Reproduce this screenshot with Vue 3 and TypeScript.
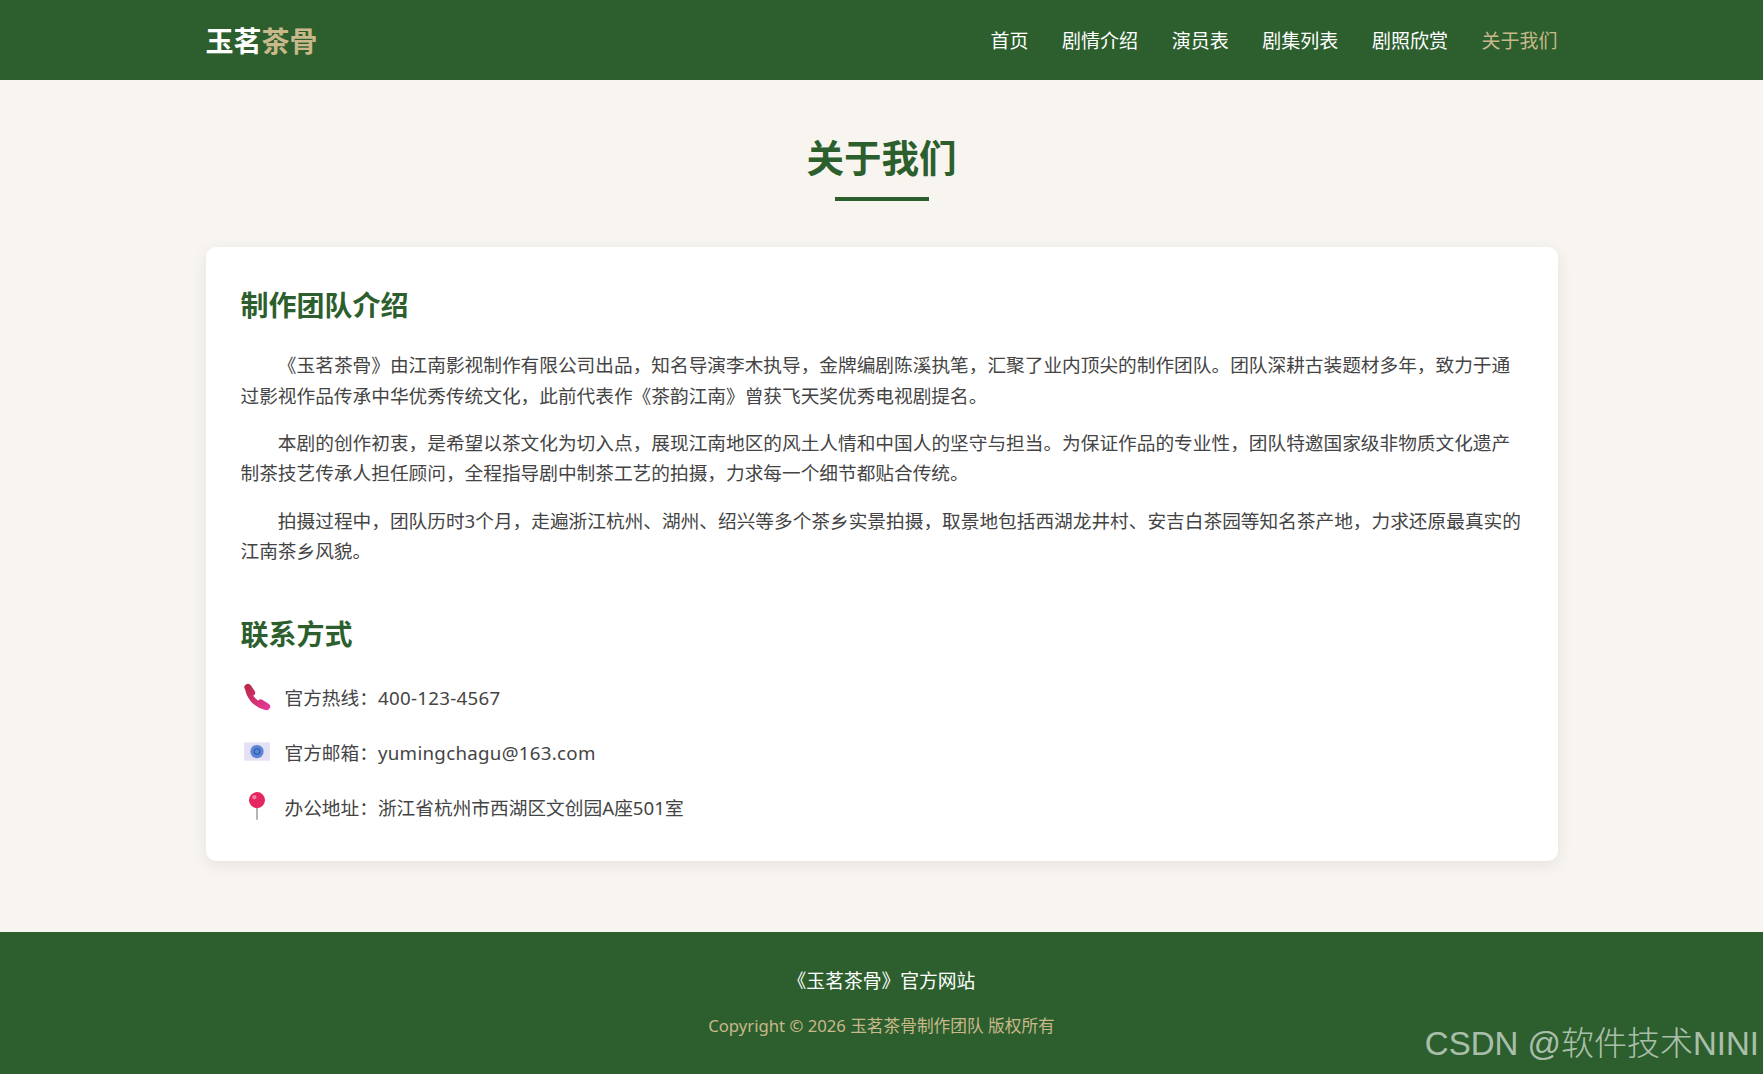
<script setup lang="ts">
interface NavItem {
  label: string
  active?: boolean
}

const navItems: NavItem[] = [
  { label: '首页' },
  { label: '剧情介绍' },
  { label: '演员表' },
  { label: '剧集列表' },
  { label: '剧照欣赏' },
  { label: '关于我们', active: true }
]

const paragraphs = [
  '《玉茗茶骨》由江南影视制作有限公司出品，知名导演李木执导，金牌编剧陈溪执笔，汇聚了业内顶尖的制作团队。团队深耕古装题材多年，致力于通过影视作品传承中华优秀传统文化，此前代表作《茶韵江南》曾获飞天奖优秀电视剧提名。',
  '本剧的创作初衷，是希望以茶文化为切入点，展现江南地区的风土人情和中国人的坚守与担当。为保证作品的专业性，团队特邀国家级非物质文化遗产制茶技艺传承人担任顾问，全程指导剧中制茶工艺的拍摄，力求每一个细节都贴合传统。',
  '拍摄过程中，团队历时3个月，走遍浙江杭州、湖州、绍兴等多个茶乡实景拍摄，取景地包括西湖龙井村、安吉白茶园等知名茶产地，力求还原最真实的江南茶乡风貌。'
]
</script>

<template>
  <div class="page">
    <header class="site-header">
      <div class="container header-inner">
        <div class="logo">玉茗<span>茶骨</span></div>
        <nav class="nav">
          <a v-for="item in navItems" :key="item.label" :class="{ active: item.active }">{{ item.label }}</a>
        </nav>
      </div>
    </header>

    <main class="container main">
      <h1 class="page-title">关于我们</h1>

      <section class="card">
        <h2>制作团队介绍</h2>
        <p v-for="text in paragraphs" :key="text" class="intro">{{ text }}</p>

        <h2 class="contact-title">联系方式</h2>
        <ul class="contact">
          <li>
            <svg class="icon" viewBox="0 0 28 28">
              <defs>
                <linearGradient id="phoneGrad" gradientUnits="userSpaceOnUse" x1="3" y1="3" x2="26" y2="26">
                  <stop offset="0" stop-color="#bb2445" />
                  <stop offset="1" stop-color="#e83c9e" />
                </linearGradient>
              </defs>
              <g fill="none" stroke="url(#phoneGrad)" stroke-linecap="round">
                <path stroke-width="5" d="M5.500 6C6 13 12 21 22 23.500" />
                <path stroke-width="6.500" d="M5.500 5L9 10" />
                <path stroke-width="6.500" d="M17.500 19.500L23 23" />
              </g>
            </svg>
            <span>官方热线：<span class="latin">400-123-4567</span></span>
          </li>
          <li>
            <svg class="icon" viewBox="0 0 28 28">
              <rect x="2" y="6" width="24" height="17" fill="#e3e1f3" />
              <circle cx="14" cy="14.500" r="6.200" fill="#5b86d6" />
              <circle cx="14" cy="14.500" r="2.600" fill="none" stroke="#2f55a4" stroke-width="1" />
            </svg>
            <span>官方邮箱：<span class="latin">yumingchagu@163.com</span></span>
          </li>
          <li>
            <svg class="icon" viewBox="0 0 28 28">
              <rect x="13.200" y="11" width="1.600" height="16" rx=".8" fill="#a9a9b0" />
              <circle cx="14" cy="8.500" r="7.500" fill="#e5265f" />
              <circle cx="11.500" cy="5.800" r="2" fill="#f77fa1" />
            </svg>
            <span>办公地址：浙江省杭州市西湖区文创园A座501室</span>
          </li>
        </ul>
      </section>
    </main>

    <footer class="site-footer">
      <p class="footer-name">《玉茗茶骨》官方网站</p>
      <p class="footer-copy">Copyright © 2026 玉茗茶骨制作团队 版权所有</p>
    </footer>

    <div class="watermark">CSDN @软件技术NINI</div>
  </div>
</template>

<style>
html,
body {
  margin: 0;
  background: #f8f5f0;
}
</style>

<style scoped>
.page {
  position: relative;
  min-height: 1074px;
  display: flex;
  flex-direction: column;
  background: #f8f5f0;
  font-family: "Noto Sans", "Noto Sans CJK SC", sans-serif;
  color: #333;
}

.container {
  width: 1352px;
  margin: 0 auto;
}

.site-header {
  height: 80px;
  background: #2d5f2e;
}

.header-inner {
  height: 100%;
  display: flex;
  align-items: center;
  justify-content: space-between;
}

.logo {
  font-size: 28px;
  font-weight: 700;
  color: #fff;
}

.logo span {
  color: #c8b88a;
}

.nav {
  display: flex;
  gap: 33.600px;
}

.nav a {
  font-size: 19px;
  color: #fff;
}

.nav a.active {
  color: #c8b88a;
}

.main {
  flex: 1;
  padding-top: 46px;
}

.page-title {
  margin: 0 0 46px;
  text-align: center;
  font-size: 37.500px;
  line-height: 64px;
  font-weight: 700;
  color: #2d5f2e;
}

.page-title::after {
  content: "";
  display: block;
  width: 94px;
  height: 4px;
  margin: 7px auto 0;
  background: #2d5f2e;
}

.card {
  box-sizing: border-box;
  background: #fff;
  border-radius: 10px;
  box-shadow: 0 4px 16px rgba(0, 0, 0, 0.08);
  padding: 38.400px 35px 34px;
  height: 614px;
}

h2 {
  margin: 0 0 25px;
  font-size: 28px;
  line-height: 40px;
  font-weight: 700;
  color: #2d5f2e;
}

.intro {
  margin: 0 0 17px;
  font-size: 18.680px;
  line-height: 30.300px;
  text-indent: 2em;
  color: #444;
}

.contact-title {
  margin: 48px 0 15.400px;
}

.contact {
  list-style: none;
  margin: 0;
  padding: 0;
}

.contact li {
  height: 54.600px;
  display: flex;
  align-items: center;
  gap: 13px;
  font-size: 18.700px;
  color: #444;
}

.latin {
  letter-spacing: 0.300px;
}

.icon {
  width: 30px;
  height: 30px;
  flex: none;
  margin-left: 1px;
}

.site-footer {
  height: 142px;
  box-sizing: border-box;
  background: #2d5f2e;
  text-align: center;
  padding-top: 34px;
}

.site-footer p {
  margin: 0;
}

.footer-name {
  font-size: 18.800px;
  line-height: 30px;
  color: #fff;
}

.footer-copy {
  margin-top: 15px !important;
  font-size: 16.700px;
  line-height: 30px;
  color: #c8b88a;
}

.watermark {
  position: absolute;
  right: 4px;
  bottom: 9px;
  font-family: "Liberation Sans", "Noto Sans CJK SC", sans-serif;
  font-size: 33px;
  font-weight: 300;
  color: rgba(255, 255, 255, 0.62);
  white-space: nowrap;
}
</style>
